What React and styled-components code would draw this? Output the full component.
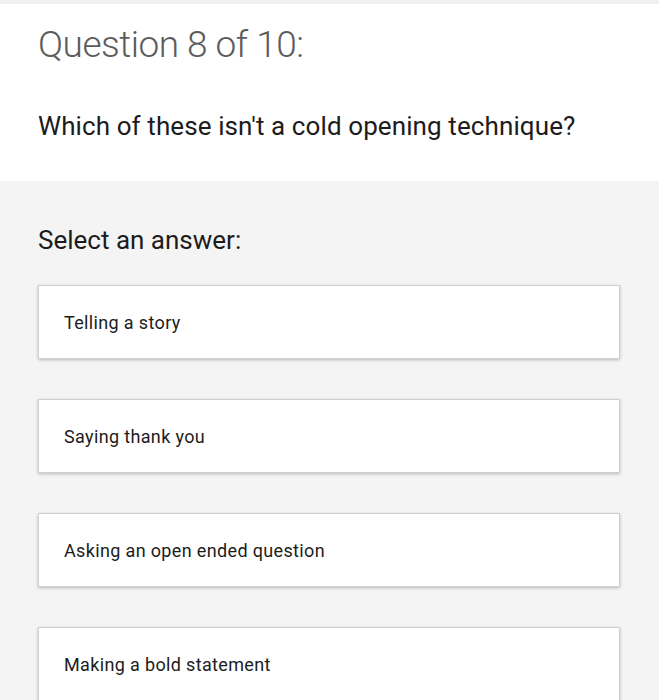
import React from "react";
import styled, { createGlobalStyle } from "styled-components";

const answers = [
  "Telling a story",
  "Saying thank you",
  "Asking an open ended question",
  "Making a bold statement",
];

const GlobalStyle = createGlobalStyle`
  * { box-sizing: border-box; }
  body {
    margin: 0;
    font-family: Roboto, "Liberation Sans", sans-serif;
    background: #f4f4f4;
  }
`;

const Page = styled.div`
  min-height: 700px;
  background: #f4f4f4;
`;

const Header = styled.header`
  background: #fff;
  padding: 19px 38px 38px;
  border-top: 4px solid #f0f0f0;
`;

const Title = styled.h1`
  margin: 0;
  font-weight: 300;
  font-size: 37px;
  line-height: 44px;
  color: #5c5c5c;
  letter-spacing: -0.5px;
`;

const Prompt = styled.p`
  margin: 42px 0 0;
  font-size: 26px;
  line-height: 34px;
  font-weight: 400;
  color: #1c1c1c;
  letter-spacing: 0.1px;
`;

const Body = styled.section`
  padding: 42px 38px 0;
`;

const Label = styled.h2`
  margin: 0 0 28px;
  font-size: 26px;
  line-height: 34px;
  font-weight: 400;
  color: #1c1c1c;
`;

const List = styled.div`
  display: flex;
  flex-direction: column;
  gap: 40px;
  width: 582px;
`;

const Option = styled.button`
  display: flex;
  align-items: center;
  height: 74px;
  padding: 0 25px;
  background: #fff;
  border: 1px solid #d0d0d0;
  box-shadow: 0 1px 3px rgba(0, 0, 0, 0.24);
  font-family: inherit;
  font-size: 18px;
  letter-spacing: 0.35px;
  color: #1c1c1c;
  text-align: left;
  cursor: pointer;
`;

export default function App() {
  return (
    <Page>
      <GlobalStyle />
      <Header>
        <Title>Question 8 of 10:</Title>
        <Prompt>Which of these isn't a cold opening technique?</Prompt>
      </Header>
      <Body>
        <Label>Select an answer:</Label>
        <List>
          {answers.map((a) => (
            <Option key={a}>{a}</Option>
          ))}
        </List>
      </Body>
    </Page>
  );
}
